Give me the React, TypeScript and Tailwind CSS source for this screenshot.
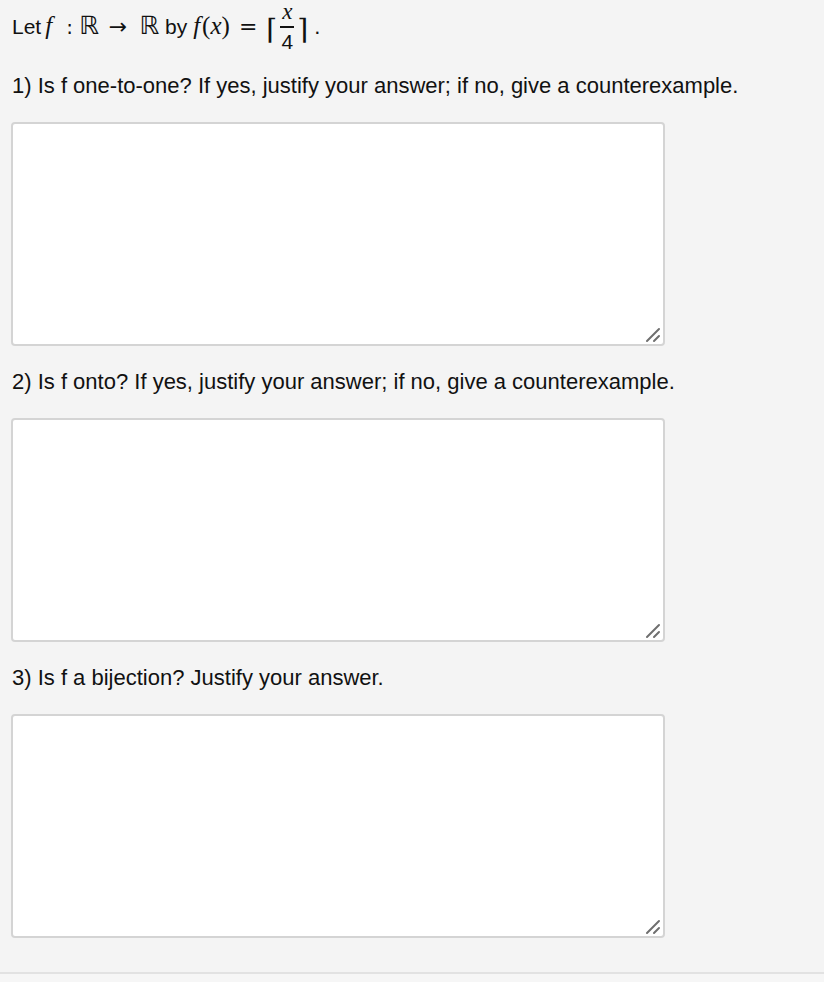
import React from "react";

const sans = { fontFamily: '"Liberation Sans", Arial, sans-serif' };

// 右下のリサイズつまみ（参照画像の濃い2本線）
function Grip() {
  return (
    <svg
      className="pointer-events-none absolute right-[4px] bottom-[3px]"
      width="16"
      height="16"
      viewBox="0 0 16 16"
    >
      <path d="M2 14L14 2M9 14L14 9" stroke="#6f6f6f" strokeWidth="2" strokeLinecap="round" />
    </svg>
  );
}

// 問題文の1ブロック（質問＋回答欄）
function Question({ text }: { text: string }) {
  return (
    <div className="mt-6">
      <p className="pl-3 text-[22px] leading-[24px] text-[#111]">{text}</p>
      <div className="relative mt-6 ml-[11px] w-[654px]">
        <textarea
          aria-label={text}
          className="block h-[224px] w-full resize-none rounded-[4px] border-2 border-[#d4d4d4] bg-white p-2 outline-none"
        />
        <Grip />
      </div>
    </div>
  );
}

function MathLine() {
  const serif = "font-['Liberation_Serif','DejaVu_Serif',serif] italic text-[25px]";
  const upright = "font-['Liberation_Serif',serif] text-[25px]";
  const sym = "font-['DejaVu_Sans',sans-serif]";
  return (
    <div className="h-[50px] pt-[3px] pl-3 text-[20px] leading-[24px] text-[#111] whitespace-nowrap">
      <span className="text-[21px]">Let</span>
      <span className={`${serif} ml-[4px]`}>f</span>
      <span className={`${sym} ml-[14px] text-[20px]`}>:</span>
      <span className={`${sym} ml-[6px] text-[25px]`}>ℝ</span>
      <span className={`${sym} ml-[10px] text-[22px]`}>→</span>
      <span className={`${sym} ml-[12px] text-[25px]`}>ℝ</span>
      <span className="ml-[6px] text-[21px]">by</span>
      <span className={`${serif} ml-[6px]`}>f</span>
      <span className={`${upright} ml-[2px]`}>(</span>
      <span className={serif}>x</span>
      <span className={upright}>)</span>
      <span className={`${sym} ml-[9px] text-[22px]`}>=</span>
      <span className="ml-[9px] font-['DejaVu_Serif',serif] text-[28px] align-[-5px]">⌈</span>
      <span className="inline-flex flex-col items-center align-[15px] mx-[3px]">
        <span className="font-['Liberation_Serif',serif] italic text-[23px] leading-[18px]">x</span>
        <span className="mt-[5px] block h-[1.5px] w-[14px] bg-[#111]" />
        <span className="mt-[2px] text-[21px] leading-[24px]">4</span>
      </span>
      <span className="font-['DejaVu_Serif',serif] text-[28px] align-[-5px]">⌉</span>
      <span className="ml-[6px] text-[22px]">.</span>
    </div>
  );
}

export default function App() {
  return (
    <div className="min-h-screen bg-[#f6f6f6]" style={sans}>
      <div className="bg-[#f4f4f4] pb-[34px] border-b-2 border-[#e2e2e2]">
        <MathLine />
        <Question text="1) Is f one-to-one? If yes, justify your answer; if no, give a counterexample." />
        <Question text="2) Is f onto? If yes, justify your answer; if no, give a counterexample." />
        <Question text="3) Is f a bijection? Justify your answer." />
      </div>
    </div>
  );
}
